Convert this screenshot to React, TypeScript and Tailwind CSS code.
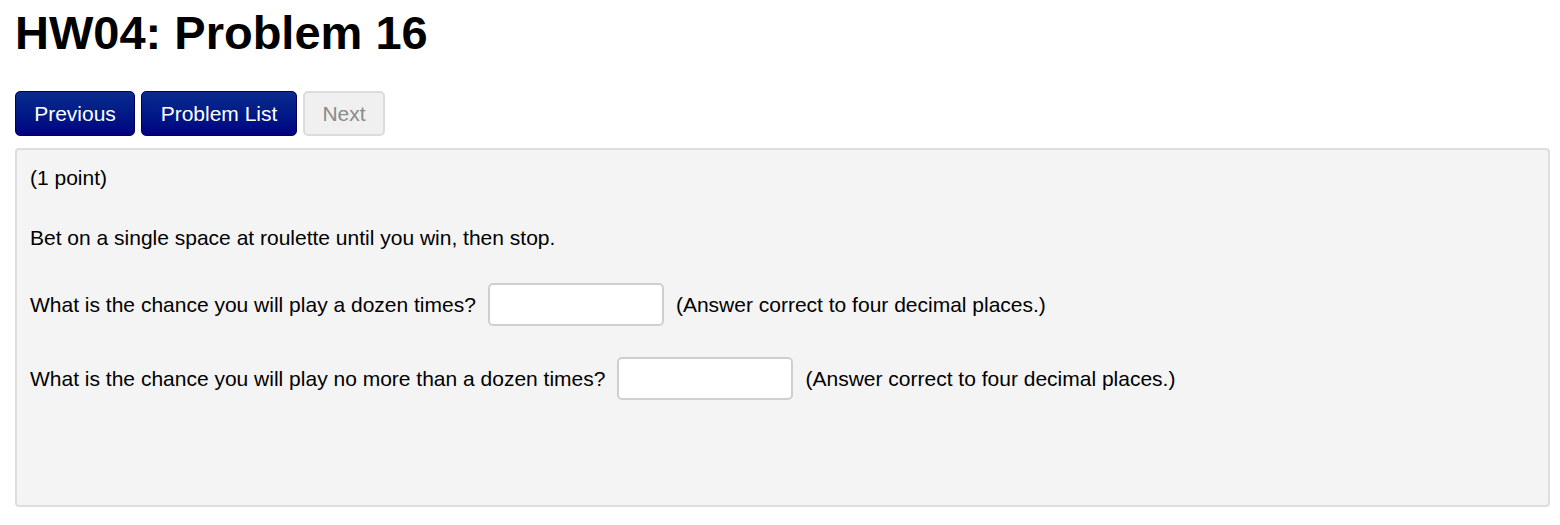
export default function App() {
  const font = { fontFamily: '"Liberation Sans", Arial, sans-serif' };

  return (
    <div className="bg-white min-h-screen px-[15px] text-black" style={font}>
      <h1 className="text-[47px] font-bold leading-[52px] pt-[7px]">HW04: Problem 16</h1>

      {/* nav buttons */}
      <div className="flex gap-[6px] mt-[32px]">
        <button className="h-[45px] w-[120px] rounded-[5px] border border-[#00005a] bg-gradient-to-b from-[#0a2a8e] to-[#000080] text-white text-[21px]">
          Previous
        </button>
        <button className="h-[45px] w-[156px] rounded-[5px] border border-[#00005a] bg-gradient-to-b from-[#0a2a8e] to-[#000080] text-white text-[21px]">
          Problem List
        </button>
        <button disabled className="h-[45px] w-[82px] rounded-[5px] border-2 border-[#dcdcdc] bg-[#f0f0f0] text-[#8a8a8a] text-[21px]">
          Next
        </button>
      </div>

      {/* problem body */}
      <div className="mt-[12px] h-[359px] w-[1535px] rounded-[4px] border-2 border-[#dedede] bg-[#f4f4f4] px-[13px] pt-[15px] text-[21px] leading-[26px]">
        <p>(1 point)</p>
        <p className="mt-[34px]">Bet on a single space at roulette until you win, then stop.</p>
        <div className="mt-[32px] flex items-center h-[43px]">
          <span>What is the chance you will play a dozen times?</span>
          <input className="ml-[12px] h-[43px] w-[176px] rounded-[5px] border-2 border-[#cfcfcf] bg-white" />
          <span className="ml-[12px]">(Answer correct to four decimal places.)</span>
        </div>
        <div className="mt-[31px] flex items-center h-[43px]">
          <span>What is the chance you will play no more than a dozen times?</span>
          <input className="ml-[12px] h-[43px] w-[176px] rounded-[5px] border-2 border-[#cfcfcf] bg-white" />
          <span className="ml-[12px]">(Answer correct to four decimal places.)</span>
        </div>
      </div>
    </div>
  );
}
